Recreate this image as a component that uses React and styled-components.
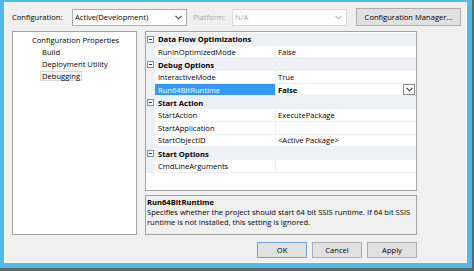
import React from 'react';
import styled, { createGlobalStyle } from 'styled-components';

const GlobalStyle = createGlobalStyle`
  html, body { margin: 0; padding: 0; background: #5c676d; }
  body {
    font-family: "Open Sans", "Noto Sans", sans-serif;
    font-size: 7.6px;
    color: #000;
  }
  * { box-sizing: border-box; }
`;

const Screen = styled.div`
  width: 474px;
  height: 271px;
  background: #5c676d;
  overflow: hidden;
`;

const Frame = styled.div`
  width: 472px;
  height: 268px;
  background: #52b9e8;
  padding: 2px 0 0 4px;
`;

const Dialog = styled.div`
  width: 463px;
  height: 261px;
  border: 1px solid #f2fafd;
  background: #f0f0f0;
  padding: 5px 0 0 7px;
  display: flex;
  flex-direction: column;
`;

const TopBar = styled.div`
  display: flex;
  align-items: center;
  height: 18px;
`;

const Label = styled.span`
  width: ${p => p.$w}px;
  margin-left: ${p => p.$ml || 0}px;
  color: ${p => (p.$disabled ? '#a8a8a8' : '#000')};
  white-space: nowrap;
`;

const Select = styled.div`
  width: 115px;
  height: 17px;
  border: 1px solid ${p => (p.$disabled ? '#d9d9d9' : '#acacac')};
  background: #fff;
  color: ${p => (p.$disabled ? '#a8a8a8' : '#000')};
  display: flex;
  align-items: center;
  justify-content: space-between;
  padding: 0 4px 0 2px;
`;

const PushButton = styled.button`
  width: ${p => p.$w}px;
  height: ${p => p.$h}px;
  margin-left: ${p => p.$ml || 0}px;
  border: 1px solid ${p => (p.$default ? '#6fa4d4' : '#adadad')};
  background: #e1e1e1;
  font: inherit;
  color: #000;
  padding: 0;
`;

const Body = styled.div`
  width: 405px;
  display: flex;
  flex-direction: column;
  margin-top: 5px;
`;

const Main = styled.div`
  display: flex;
  height: 204px;
`;

const Tree = styled.div`
  width: 125px;
  border: 1px solid #a3a3a3;
  background: #fff;
  padding: 2px 0 0 17px;
`;

const TreeRow = styled.div`
  height: 12px;
  display: flex;
  align-items: center;
`;

const TreeLabel = styled.span`
  margin-left: ${p => (p.$child ? 10 : 0)}px;
  padding: 0 1px;
  height: 10px;
  line-height: 8px;
  border: 1px solid ${p => (p.$selected ? '#dadada' : 'transparent')};
  background: ${p => (p.$selected ? '#f7f7f7' : 'transparent')};
  white-space: nowrap;
`;

const RightColumn = styled.div`
  width: 272px;
  margin-left: 8px;
  display: flex;
  flex-direction: column;
  gap: 4px;
`;

const Grid = styled.div`
  height: 160px;
  border: 1px solid #a3a3a3;
  background: #fff;
  padding-top: 1px;
`;

const Row = styled.div`
  display: grid;
  grid-template-columns: 9px 120px 1fr;
  height: 12.7px;
  background: #edf0f5;
`;

const Toggle = styled.span`
  width: 7px;
  height: 7px;
  margin: auto 0 auto 1px;
  border: 1px solid #8c8c8c;
  background: #fff;
  display: flex;
  align-items: center;
  justify-content: center;
  &::after {
    content: '';
    width: 3px;
    height: 1px;
    background: #333;
  }
`;

const CategoryText = styled.span`
  grid-column: 2 / 4;
  padding-left: 3px;
  font-weight: 700;
  display: flex;
  align-items: center;
`;

const NameCell = styled.span`
  display: flex;
  align-items: center;
  padding-left: 3px;
  margin-bottom: 1px;
  background: ${p => (p.$selected ? '#3399ff' : '#fff')};
  color: ${p => (p.$selected ? '#fff' : '#000')};
`;

const ValueCell = styled.span`
  display: flex;
  align-items: center;
  padding-left: 2px;
  margin: 0 0 1px 1px;
  background: #fff;
  font-weight: ${p => (p.$bold ? 700 : 400)};
`;

const DropButton = styled.span`
  margin-left: auto;
  margin-right: 1px;
  width: 12px;
  height: 11px;
  border: 1px solid #8a8a8a;
  background: #fff;
  display: flex;
  align-items: center;
  justify-content: center;
`;

const Description = styled.div`
  height: 40px;
  border: 1px solid #a3a3a3;
  background: #f0f0f0;
  padding: 1px 0 0 1px;
  line-height: 10px;
`;

const DescTitle = styled.div`
  font-weight: 700;
`;

const Footer = styled.div`
  display: flex;
  justify-content: flex-end;
  gap: 5px;
  margin-top: 7px;
`;

function Chevron({ color = '#444' }) {
  return (
    <svg width="7" height="5" viewBox="0 0 7 5">
      <polyline points="0.5,0.8 3.5,3.8 6.5,0.8" fill="none" stroke={color} strokeWidth="1.1" />
    </svg>
  );
}

const rows = [
  { cat: 'Data Flow Optimizations' },
  { name: 'RunInOptimizedMode', value: 'False' },
  { cat: 'Debug Options' },
  { name: 'InteractiveMode', value: 'True' },
  { name: 'Run64BitRuntime', value: 'False', selected: true },
  { cat: 'Start Action' },
  { name: 'StartAction', value: 'ExecutePackage' },
  { name: 'StartApplication', value: '' },
  { name: 'StartObjectID', value: '<Active Package>' },
  { cat: 'Start Options' },
  { name: 'CmdLineArguments', value: '' },
];

export default function App() {
  return (
    <Screen>
      <GlobalStyle />
      <Frame>
        <Dialog>
          <TopBar>
            <Label $w={60}>Configuration:</Label>
            <Select>
              <span>Active(Development)</span>
              <Chevron />
            </Select>
            <Label $w={39} $ml={6} $disabled>Platform:</Label>
            <Select $disabled>
              <span>N/A</span>
              <Chevron color="#b5b5b5" />
            </Select>
            <PushButton $w={105} $h={18} $ml={9}>Configuration Manager...</PushButton>
          </TopBar>
          <Body>
            <Main>
              <Tree>
                <TreeRow><TreeLabel>Configuration Properties</TreeLabel></TreeRow>
                <TreeRow><TreeLabel $child>Build</TreeLabel></TreeRow>
                <TreeRow><TreeLabel $child>Deployment Utility</TreeLabel></TreeRow>
                <TreeRow><TreeLabel $child $selected>Debugging</TreeLabel></TreeRow>
              </Tree>
              <RightColumn>
                <Grid>
                  {rows.map((r, i) =>
                    r.cat ? (
                      <Row key={i}>
                        <Toggle />
                        <CategoryText>{r.cat}</CategoryText>
                      </Row>
                    ) : (
                      <Row key={i}>
                        <span />
                        <NameCell $selected={r.selected}>{r.name}</NameCell>
                        <ValueCell $bold={r.selected}>
                          {r.value}
                          {r.selected && (
                            <DropButton><Chevron color="#333" /></DropButton>
                          )}
                        </ValueCell>
                      </Row>
                    )
                  )}
                </Grid>
                <Description>
                  <DescTitle>Run64BitRuntime</DescTitle>
                  <div>
                    Specifies whether the project should start 64 bit SSIS runtime. If 64 bit SSIS
                    runtime is not installed, this setting is ignored.
                  </div>
                </Description>
              </RightColumn>
            </Main>
            <Footer>
              <PushButton $w={50} $h={16} $default>OK</PushButton>
              <PushButton $w={50} $h={16}>Cancel</PushButton>
              <PushButton $w={50} $h={16}>Apply</PushButton>
            </Footer>
          </Body>
        </Dialog>
      </Frame>
    </Screen>
  );
}
